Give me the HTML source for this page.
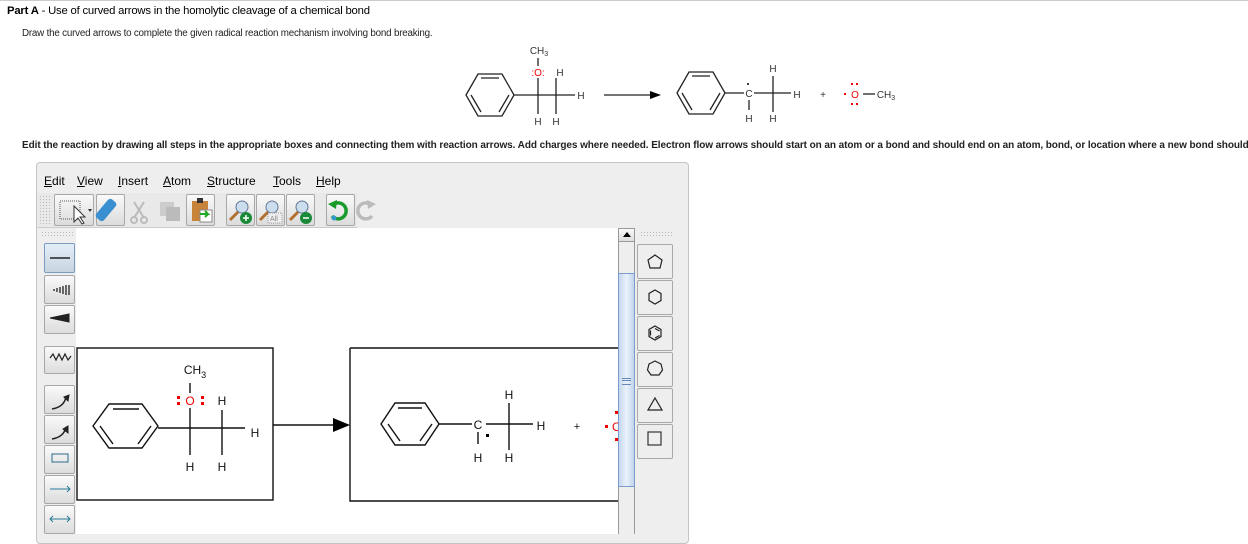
<!DOCTYPE html>
<html><head><meta charset="utf-8"><style>
body{margin:0;width:1248px;height:534px;overflow:hidden;background:#fff;font-family:"Liberation Sans",Arial,sans-serif;position:relative}
.t{position:absolute;white-space:nowrap;color:#000}
.menu span{position:absolute;top:174px;font-size:12px}
.menu span u{text-decoration:underline}
.btn{position:absolute;border:1px solid #a8a8a8;background:linear-gradient(#fafafa,#dcdcdc);box-sizing:border-box;border-radius:2px}
</style></head><body>
<div style="position:absolute;left:0;top:0;width:1248px;height:1px;background:#ccc"></div>
<div class="t" style="left:7px;top:5px;font-size:11.3px;letter-spacing:-0.2px"><b>Part A</b> - Use of curved arrows in the homolytic cleavage of a chemical bond</div>
<div class="t" style="left:22px;top:28px;font-size:9.8px;letter-spacing:-0.2px;color:#222">Draw the curved arrows to complete the given radical reaction mechanism involving bond breaking.</div>
<div class="t" style="left:22px;top:140px;font-size:10px;font-weight:bold;letter-spacing:-0.08px;color:#222">Edit the reaction by drawing all steps in the appropriate boxes and connecting them with reaction arrows. Add charges where needed. Electron flow arrows should start on an atom or a bond and should end on an atom, bond, or location where a new bond should</div>

<!-- top reaction -->
<svg style="position:absolute;left:0;top:0" width="1248" height="138" font-family="Liberation Sans,Arial" font-size="10">
<g stroke="#222" stroke-width="1.3" fill="none">
<polygon points="466,95 478,74 502,74 514,95 502,116 478,116"/>
<line x1="481" y1="78" x2="499" y2="78"/><line x1="471" y1="95" x2="481" y2="112"/><line x1="509" y1="95" x2="499" y2="112"/>
<line x1="514" y1="95" x2="575" y2="95"/><line x1="538" y1="58" x2="538" y2="66"/><line x1="538" y1="78" x2="538" y2="114"/><line x1="556" y1="78" x2="556" y2="114"/>
<line x1="604" y1="95" x2="650" y2="95"/>
<polygon points="677,93 689,72 713,72 725,93 713,114 689,114"/>
<line x1="692" y1="76" x2="710" y2="76"/><line x1="682" y1="93" x2="692" y2="110"/><line x1="720" y1="93" x2="710" y2="110"/>
<line x1="725" y1="93" x2="744" y2="93"/><line x1="754" y1="93" x2="791" y2="93"/><line x1="749" y1="100" x2="749" y2="110"/><line x1="773" y1="76" x2="773" y2="112"/>
<line x1="863" y1="94" x2="875" y2="94"/>
</g>
<polygon points="650,91 661,95 650,99" fill="#000"/>
<g fill="#333" text-anchor="middle">
<text x="539" y="54">CH<tspan font-size="7" dy="2">3</tspan></text>
<text x="560" y="76">H</text><text x="581" y="99">H</text><text x="538" y="125">H</text><text x="556" y="125">H</text>
<text x="749" y="97">C</text><text x="749" y="122">H</text><text x="773" y="72">H</text><text x="773" y="122">H</text><text x="797" y="98">H</text>
<text x="823" y="98">+</text><text x="886" y="98">CH<tspan font-size="7" dy="2">3</tspan></text>
</g>
<circle cx="748" cy="84" r="1" fill="#000"/>
<g fill="#e00"><text x="538" y="76" text-anchor="middle">:O:</text><text x="855" y="98" text-anchor="middle">O</text>
<rect x="844" y="93" width="2" height="2"/><rect x="851" y="83" width="2" height="2"/><rect x="856" y="83" width="2" height="2"/><rect x="851" y="103" width="2" height="2"/><rect x="856" y="103" width="2" height="2"/></g>
</svg>

<!-- editor panel -->
<div style="position:absolute;left:36px;top:162px;width:651px;height:380px;border:1px solid #c4c4c4;border-radius:4px;background:#eee"></div>
<div class="menu"><span style="left:44px"><u>E</u>dit</span><span style="left:77px"><u>V</u>iew</span><span style="left:118px"><u>I</u>nsert</span><span style="left:163px"><u>A</u>tom</span><span style="left:207px"><u>S</u>tructure</span><span style="left:273px"><u>T</u>ools</span><span style="left:316px"><u>H</u>elp</span></div>
<div style="position:absolute;left:37px;top:193px;width:320px;height:34px;background:#e9e9e9;border-bottom:1px solid #ccc"></div>
<div style="position:absolute;left:39px;top:195px;width:12px;height:30px;background:radial-gradient(#bbb 0.6px,transparent 0.8px) 0 0/3px 3px"></div>
<div class="btn" style="left:54px;top:194px;width:40px;height:32px"></div>
<div class="btn" style="left:96px;top:194px;width:29px;height:32px"></div>
<div class="btn" style="left:186px;top:194px;width:29px;height:32px"></div>
<div class="btn" style="left:226px;top:194px;width:29px;height:32px"></div>
<div class="btn" style="left:256px;top:194px;width:29px;height:32px"></div>
<div class="btn" style="left:286px;top:194px;width:29px;height:32px"></div>
<div class="btn" style="left:326px;top:194px;width:29px;height:32px"></div>
<svg style="position:absolute;left:54px;top:194px" width="336" height="34">
<rect x="6" y="7" width="20" height="18" fill="none" stroke="#555" stroke-dasharray="1,1"/>
<polygon points="20,12 20,28 24,24 28,30 30,29 26,23 31,23" fill="#fff" stroke="#333"/>
<polygon points="34,15 38,15 36,18" fill="#333"/>
<rect x="47" y="4" width="10" height="24" rx="3" transform="rotate(40 52 16)" fill="#3a8fd0"/>
<path d="M80 8 L90 24 M90 8 L80 24" stroke="#bbb" stroke-width="2"/><circle cx="80" cy="26" r="3" fill="none" stroke="#bbb" stroke-width="2"/><circle cx="90" cy="26" r="3" fill="none" stroke="#bbb" stroke-width="2"/>
<rect x="106" y="8" width="14" height="14" fill="#ccc"/><rect x="112" y="13" width="14" height="14" fill="#bbb"/>
<rect x="138" y="7" width="16" height="20" fill="#c8833a"/><rect x="143" y="4" width="6" height="5" fill="#333"/><rect x="146" y="16" width="12" height="12" fill="#fff" stroke="#888"/><path d="M146 20 h8 l-3 -3 M154 20 l-3 3" stroke="#2a2" stroke-width="2" fill="none"/>
<g><line x1="176" y1="26" x2="184" y2="18" stroke="#b27030" stroke-width="3"/><circle cx="188" cy="13" r="6" fill="#cde" stroke="#679"/><circle cx="192" cy="24" r="6" fill="#1a8a3a"/><path d="M189 24h6M192 21v6" stroke="#fff" stroke-width="1.5"/></g>
<g><line x1="206" y1="26" x2="214" y2="18" stroke="#b27030" stroke-width="3"/><circle cx="218" cy="13" r="6" fill="#cde" stroke="#679"/><rect x="214" y="19" width="14" height="10" fill="#eee" stroke="#999" stroke-dasharray="1,1"/><text x="216" y="27" font-size="7" fill="#888" font-family="Liberation Sans">All</text></g>
<g><line x1="236" y1="26" x2="244" y2="18" stroke="#b27030" stroke-width="3"/><circle cx="248" cy="13" r="6" fill="#cde" stroke="#679"/><circle cx="252" cy="24" r="6" fill="#1a8a3a"/><path d="M249 24h6" stroke="#fff" stroke-width="1.5"/></g>
<path d="M278 22 A8 8 0 1 0 280 10" fill="none" stroke="#1a9a2a" stroke-width="3.5"/><polygon points="274,10 283,6 282,15" fill="#1a9a2a"/><circle cx="280" cy="24" r="2.5" fill="#39c"/>
<path d="M318 22 A8 8 0 1 1 316 10" fill="none" stroke="#bbb" stroke-width="3.5"/><polygon points="322,10 313,6 314,15" fill="#bbb"/>
</svg>

<!-- canvas -->
<div style="position:absolute;left:76px;top:228px;width:542px;height:306px;background:#fff"></div>
<div style="position:absolute;left:41px;top:231px;width:33px;height:7px;background:radial-gradient(#bbb 0.6px,transparent 0.8px) 0 0/3px 3px"></div>
<div style="position:absolute;left:640px;top:231px;width:33px;height:7px;background:radial-gradient(#bbb 0.6px,transparent 0.8px) 0 0/3px 3px"></div>
<!-- left palette -->
<div class="btn" style="left:44px;top:243px;width:31px;height:30px;border-color:#7a9cc0;background:linear-gradient(#e4eefa,#c8d4e0)"></div>
<div class="btn" style="left:44px;top:275px;width:31px;height:29px"></div>
<div class="btn" style="left:44px;top:305px;width:31px;height:29px"></div>
<div class="btn" style="left:44px;top:346px;width:31px;height:28px"></div>
<div class="btn" style="left:44px;top:385px;width:31px;height:29px"></div>
<div class="btn" style="left:44px;top:415px;width:31px;height:29px"></div>
<div class="btn" style="left:44px;top:445px;width:31px;height:29px"></div>
<div class="btn" style="left:44px;top:475px;width:31px;height:29px"></div>
<div class="btn" style="left:44px;top:505px;width:31px;height:29px"></div>
<svg style="position:absolute;left:44px;top:243px" width="32" height="291" stroke="#222" fill="none">
<line x1="6" y1="15" x2="26" y2="15" stroke-width="1.5"/>
<path d="M10 46v2M13 45v4M16 44v6M19 43v8M22 42v10M25 42v10" stroke-width="1.3"/>
<polygon points="6,75 25,71 25,79" fill="#222"/>
<path d="M6 115 l3 -4 l3 6 l3 -6 l3 6 l3 -6 l3 6 l3 -4" stroke-width="1.2"/>
<path d="M8 166 q12 -2 14 -12" stroke-width="1.5"/><polygon points="20,154 25,152 24,158" fill="#222"/>
<path d="M8 196 q12 -2 14 -12" stroke-width="1.5"/><polygon points="19,186 24,183 24,190" fill="#222"/>
<rect x="8" y="211" width="16" height="8" stroke="#2a6a8a"/>
<path d="M6 246h20M23 243l3 3l-3 3" stroke="#2a7a9a"/>
<path d="M6 276h20M23 273l3 3l-3 3M9 273l-3 3l3 3" stroke="#2a7a9a"/>
</svg>

<!-- molecules in canvas -->
<svg style="position:absolute;left:0;top:0" width="618" height="534" font-family="Liberation Sans,Arial" font-size="12">
<g stroke="#111" stroke-width="1.4" fill="none">
<rect x="77" y="348" width="196" height="152"/>
<path d="M350 348 H620 M350 348 V501 H620"/>
<line x1="273" y1="425" x2="336" y2="425"/>
<polygon points="93,426 109,404 142,404 158,426 142,448 109,448"/>
<line x1="113" y1="409" x2="139" y2="409"/><line x1="100" y1="426" x2="113" y2="444"/><line x1="151" y1="426" x2="138" y2="444"/>
<line x1="158" y1="428" x2="245" y2="428"/><line x1="190" y1="383" x2="190" y2="393"/><line x1="190" y1="408" x2="190" y2="455"/><line x1="222" y1="410" x2="222" y2="455"/>
<polygon points="381,424 395,403 425,403 439,424 425,445 395,445"/>
<line x1="398" y1="408" x2="422" y2="408"/><line x1="388" y1="424" x2="400" y2="441"/><line x1="432" y1="424" x2="420" y2="441"/>
<line x1="439" y1="424" x2="472" y2="424"/><line x1="486" y1="424" x2="533" y2="424"/><line x1="478" y1="432" x2="478" y2="444"/><line x1="509" y1="403" x2="509" y2="450"/>
</g>
<polygon points="333,418 350,425 333,432" fill="#000"/>
<g fill="#111" text-anchor="middle">
<text x="195" y="374">CH<tspan font-size="9" dy="4">3</tspan></text>
<text x="222" y="405">H</text><text x="255" y="437">H</text><text x="190" y="471">H</text><text x="222" y="471">H</text>
<text x="478" y="429">C</text><text x="509" y="399">H</text><text x="541" y="430">H</text><text x="478" y="462">H</text><text x="509" y="462">H</text>
<text x="577" y="430" font-size="11">+</text>
</g>
<rect x="486" y="434" width="3" height="3" fill="#000"/>
<g fill="#e00"><text x="190" y="405" text-anchor="middle">O</text>
<rect x="177" y="396" width="3" height="3"/><rect x="177" y="402" width="3" height="3"/><rect x="201" y="396" width="3" height="3"/><rect x="201" y="402" width="3" height="3"/>
<rect x="605" y="425" width="3" height="3"/><rect x="615" y="411" width="3" height="3"/><rect x="615" y="438" width="3" height="3"/>
<text x="612" y="431" font-size="12">O</text></g>
</svg>

<!-- scrollbar -->
<div style="position:absolute;left:618px;top:228px;width:17px;height:306px;background:#eee;border-left:1px solid #999;border-right:1px solid #999;box-sizing:border-box"></div>
<div style="position:absolute;left:618px;top:228px;width:17px;height:14px;background:linear-gradient(#fafafa,#ddd);border:1px solid #999;box-sizing:border-box"></div>
<div style="position:absolute;left:623px;top:232px;width:0;height:0;border-left:4px solid transparent;border-right:4px solid transparent;border-bottom:5px solid #000"></div>
<div style="position:absolute;left:618px;top:273px;width:17px;height:214px;background:linear-gradient(90deg,#c6d8ee,#eaf2fb,#c0d4ea);border:1px solid #7b9bcf;box-sizing:border-box"></div>
<div style="position:absolute;left:622px;top:378px;width:9px;height:5px;border-top:1px solid #6688bb;border-bottom:1px solid #6688bb"></div>
<div style="position:absolute;left:622px;top:380px;width:9px;height:1px;background:#6688bb"></div>

<!-- right palette -->
<div class="btn" style="left:637px;top:244px;width:36px;height:35px;background:#eee"></div>
<div class="btn" style="left:637px;top:280px;width:36px;height:35px;background:#eee"></div>
<div class="btn" style="left:637px;top:316px;width:36px;height:35px;background:#eee"></div>
<div class="btn" style="left:637px;top:352px;width:36px;height:35px;background:#eee"></div>
<div class="btn" style="left:637px;top:388px;width:36px;height:35px;background:#eee"></div>
<div class="btn" style="left:637px;top:424px;width:36px;height:35px;background:#eee"></div>
<svg style="position:absolute;left:637px;top:244px" width="37" height="216" fill="none" stroke="#222" stroke-width="1.2">
<polygon points="18,11 25,16 23,24 13,24 11,16"/>
<polygon points="18,46 24,49.5 24,56.5 18,60 12,56.5 12,49.5"/>
<polygon points="18,82 24,85.5 24,92.5 18,96 12,92.5 12,85.5"/><path d="M18 84.5 L22.5 87 M22.5 91.5 L18 94 M13.5 91.5 V86.5"/>
<polygon points="18,117 24,120 25.5,126 22,131 14,131 10.5,126 12,120"/>
<polygon points="18,154 25,166 11,166"/>
<rect x="11" y="188" width="13" height="13" stroke="#333"/>
</svg>
</body></html>
